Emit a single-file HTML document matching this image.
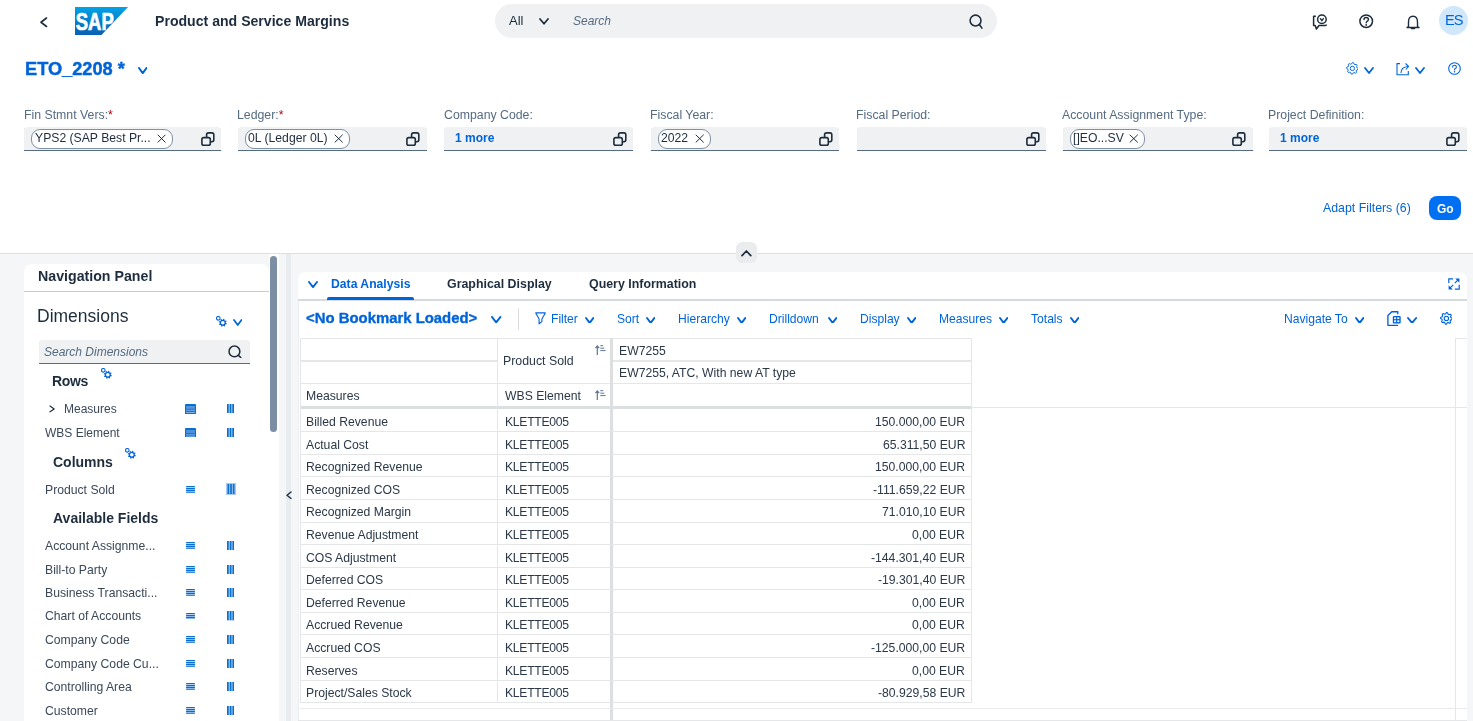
<!DOCTYPE html><html><head><meta charset="utf-8"><style>
html,body{margin:0;padding:0;}
body{width:1473px;height:721px;overflow:hidden;position:relative;background:#fff;font-family:"Liberation Sans",sans-serif;}
.t{position:absolute;white-space:pre;line-height:1;will-change:transform;}
.r{position:absolute;}
</style></head><body>
<svg class="r" style="left:40.00px;top:17.00px;" width="7.5" height="10.5" viewBox="0 0 7.5 10.5" fill="none"><polyline points="6.50,1 1,5.25 6.50,9.50" stroke="#1d2d3e" stroke-width="1.6" stroke-linecap="round" stroke-linejoin="round"/></svg>
<svg class="r" style="left:75.00px;top:6.50px;" width="53" height="28" viewBox="0 0 53 28" fill="none"><defs><linearGradient id="sapg" x1="0" y1="0" x2="0" y2="1"><stop offset="0" stop-color="#00a2e6"/><stop offset="1" stop-color="#0a5fb4"/></linearGradient></defs><polygon points="0,0 53,0 26.5,28 0,28" fill="url(#sapg)"/><text x="0.8" y="22.6" font-family="Liberation Sans" font-weight="bold" font-size="23.5" fill="#fff" stroke="#fff" stroke-width="0.7" textLength="38" lengthAdjust="spacingAndGlyphs">SAP</text></svg>
<div class="t" style="left:154.50px;top:14.36px;font-size:14.1px;font-weight:bold;color:#1d2d3e;font-style:normal;">Product and Service Margins</div>
<div class="r" style="left:495.00px;top:4.00px;width:502.00px;height:34.40px;background:#eff1f2;border-radius:17px;"></div>
<div class="t" style="left:509.30px;top:14.00px;font-size:13px;font-weight:normal;color:#1d2d3e;font-style:normal;">All</div>
<svg class="r" style="left:538.50px;top:18.00px;" width="10.0" height="6.8" viewBox="0 0 10.0 6.8" fill="none"><polyline points="1,1 5.00,5.80 9.00,1" stroke="#1d2d3e" stroke-width="1.7" stroke-linecap="round" stroke-linejoin="round"/></svg>
<div class="t" style="left:573.10px;top:14.84px;font-size:12px;font-weight:normal;color:#556b82;font-style:italic;">Search</div>
<svg class="r" style="left:969.00px;top:14.00px;" width="13.6" height="14.8" viewBox="0 0 13.6 14.8" fill="none"><circle cx="6.54" cy="6.54" r="5.44" stroke="#1d2d3e" stroke-width="1.6"/><line x1="10.46" y1="10.46" x2="12.90" y2="14.10" stroke="#1d2d3e" stroke-width="1.6" stroke-linecap="round"/></svg>
<svg class="r" style="left:1311.50px;top:14.00px;" width="16" height="16" viewBox="0 0 16 16" fill="none"><path d="M3.9 2.2 H1.6 V11.5 H3.2 L4.4 15 L7 11.5 H13.4 Q14.4 11.5 14.4 10.5" stroke="#1d2d3e" stroke-width="1.5" stroke-linejoin="round"/><circle cx="9.9" cy="5.2" r="4.3" stroke="#1d2d3e" stroke-width="1.5"/><path d="M8.4 4.6 L9.9 6.6 L11.4 4.6" stroke="#1d2d3e" stroke-width="1.3" stroke-linecap="round"/></svg>
<svg class="r" style="left:1359.00px;top:14.20px;" width="14.5" height="14.5" viewBox="0 0 14.5 14.5" fill="none"><circle cx="7.2" cy="7.2" r="6.3" stroke="#1d2d3e" stroke-width="1.5"/><path d="M5 5.6 Q5 3.5 7.2 3.5 Q9.4 3.5 9.4 5.5 Q9.4 6.8 7.9 7.5 Q7.2 7.9 7.2 8.8" stroke="#1d2d3e" stroke-width="1.4" stroke-linecap="round"/><circle cx="7.2" cy="10.9" r="0.9" fill="#1d2d3e"/></svg>
<svg class="r" style="left:1406.00px;top:15.00px;" width="14" height="15" viewBox="0 0 14 15" fill="none"><path d="M2.5 11.5 V7 Q2.5 1.2 7 1.2 Q11.5 1.2 11.5 7 V11.5 L13 12.5 H1 Z" stroke="#1d2d3e" stroke-width="1.4" stroke-linejoin="round"/><path d="M5.5 13.5 H8.5" stroke="#1d2d3e" stroke-width="1.6" stroke-linecap="round"/></svg>
<div class="r" style="left:1439.40px;top:6.30px;width:28.80px;height:29.00px;background:#d1e8fc;border-radius:50%;"></div>
<div class="t" style="left:1444.80px;top:12.54px;font-size:14.6px;font-weight:normal;color:#0064d9;font-style:normal;letter-spacing:-1.1px;">ES</div>
<div class="t" style="left:24.60px;top:59.89px;font-size:18.2px;font-weight:bold;color:#0064d9;font-style:normal;-webkit-text-stroke:0.45px #0064d9;">ETO_2208 *</div>
<svg class="r" style="left:137.50px;top:66.50px;" width="9.5" height="7.1" viewBox="0 0 9.5 7.1" fill="none"><polyline points="1,1 4.75,6.10 8.50,1" stroke="#0064d9" stroke-width="2.0" stroke-linecap="round" stroke-linejoin="round"/></svg>
<svg class="r" style="left:1345.50px;top:62.20px;" width="12.8" height="12.8" viewBox="0 0 12.8 12.8" fill="none"><polygon points="12.20,6.40 12.09,7.53 10.58,8.13 10.16,8.91 10.50,10.50 9.62,11.22 8.13,10.58 7.28,10.84 6.40,12.20 5.27,12.09 4.67,10.58 3.89,10.16 2.30,10.50 1.58,9.62 2.22,8.13 1.96,7.28 0.60,6.40 0.71,5.27 2.22,4.67 2.64,3.89 2.30,2.30 3.18,1.58 4.67,2.22 5.52,1.96 6.40,0.60 7.53,0.71 8.13,2.22 8.91,2.64 10.50,2.30 11.22,3.18 10.58,4.67 10.84,5.52" stroke="#0064d9" stroke-width="0.95" stroke-linejoin="round"/><circle cx="6.4" cy="6.4" r="2.18" stroke="#0064d9" stroke-width="0.95"/></svg>
<svg class="r" style="left:1364.00px;top:66.50px;" width="10" height="7.0" viewBox="0 0 10 7.0" fill="none"><polyline points="1,1 5.00,6.00 9.00,1" stroke="#0064d9" stroke-width="1.8" stroke-linecap="round" stroke-linejoin="round"/></svg>
<svg class="r" style="left:1396.00px;top:62.00px;" width="14" height="13.5" viewBox="0 0 14 13.5" fill="none"><path d="M4 1.6 H1 V12.8 H12.3 V9" stroke="#0064d9" stroke-width="1.1"/><path d="M5 11 Q5 5 12 4.5" stroke="#0064d9" stroke-width="1.05"/><path d="M9.5 1.5 L12.6 4.5 L9.8 7.5" stroke="#0064d9" stroke-width="1.05" stroke-linejoin="round"/></svg>
<svg class="r" style="left:1415.00px;top:66.50px;" width="10" height="7.0" viewBox="0 0 10 7.0" fill="none"><polyline points="1,1 5.00,6.00 9.00,1" stroke="#0064d9" stroke-width="1.8" stroke-linecap="round" stroke-linejoin="round"/></svg>
<svg class="r" style="left:1447.80px;top:62.00px;" width="13" height="13" viewBox="0 0 13 13" fill="none"><circle cx="6.5" cy="6.5" r="5.8" stroke="#0064d9" stroke-width="1.1"/><path d="M4.6 5.1 Q4.6 3.2 6.5 3.2 Q8.4 3.2 8.4 5 Q8.4 6.1 7.1 6.8 Q6.5 7.2 6.5 8" stroke="#0064d9" stroke-width="1.1" stroke-linecap="round"/><circle cx="6.5" cy="9.8" r="0.75" fill="#0064d9"/></svg>
<div class="t" style="left:23.60px;top:108.69px;font-size:12.3px;font-weight:normal;color:#556b82;font-style:normal;">Fin Stmnt Vers:<span style="color:#aa0808">*</span></div>
<div class="r" style="left:24.30px;top:127.00px;width:196.80px;height:24.00px;background:#eff1f2;border-radius:4px 4px 0 0;box-shadow:inset 0 -1px 0 #556b81;"></div>
<svg class="r" style="left:200.80px;top:131.60px;" width="14" height="14" viewBox="0 0 14 14" fill="none"><rect x="0.9" y="5.6" width="8.4" height="7.6" rx="1.8" stroke="#1d2d3e" stroke-width="1.6"/><path d="M5.6 5.2 V2.8 Q5.6 0.9 7.5 0.9 H11 Q12.8 0.9 12.8 2.8 V7.8 Q12.8 9.7 11 9.7 H9.6" stroke="#1d2d3e" stroke-width="1.6" fill="none"/></svg>
<div class="t" style="left:237.40px;top:108.69px;font-size:12.3px;font-weight:normal;color:#556b82;font-style:normal;">Ledger:<span style="color:#aa0808">*</span></div>
<div class="r" style="left:238.10px;top:127.00px;width:188.50px;height:24.00px;background:#eff1f2;border-radius:4px 4px 0 0;box-shadow:inset 0 -1px 0 #556b81;"></div>
<svg class="r" style="left:406.30px;top:131.60px;" width="14" height="14" viewBox="0 0 14 14" fill="none"><rect x="0.9" y="5.6" width="8.4" height="7.6" rx="1.8" stroke="#1d2d3e" stroke-width="1.6"/><path d="M5.6 5.2 V2.8 Q5.6 0.9 7.5 0.9 H11 Q12.8 0.9 12.8 2.8 V7.8 Q12.8 9.7 11 9.7 H9.6" stroke="#1d2d3e" stroke-width="1.6" fill="none"/></svg>
<div class="t" style="left:443.70px;top:108.69px;font-size:12.3px;font-weight:normal;color:#556b82;font-style:normal;">Company Code:</div>
<div class="r" style="left:444.40px;top:127.00px;width:188.80px;height:24.00px;background:#eff1f2;border-radius:4px 4px 0 0;box-shadow:inset 0 -1px 0 #556b81;"></div>
<svg class="r" style="left:612.90px;top:131.60px;" width="14" height="14" viewBox="0 0 14 14" fill="none"><rect x="0.9" y="5.6" width="8.4" height="7.6" rx="1.8" stroke="#1d2d3e" stroke-width="1.6"/><path d="M5.6 5.2 V2.8 Q5.6 0.9 7.5 0.9 H11 Q12.8 0.9 12.8 2.8 V7.8 Q12.8 9.7 11 9.7 H9.6" stroke="#1d2d3e" stroke-width="1.6" fill="none"/></svg>
<div class="t" style="left:650.00px;top:108.69px;font-size:12.3px;font-weight:normal;color:#556b82;font-style:normal;">Fiscal Year:</div>
<div class="r" style="left:650.70px;top:127.00px;width:188.80px;height:24.00px;background:#eff1f2;border-radius:4px 4px 0 0;box-shadow:inset 0 -1px 0 #556b81;"></div>
<svg class="r" style="left:819.20px;top:131.60px;" width="14" height="14" viewBox="0 0 14 14" fill="none"><rect x="0.9" y="5.6" width="8.4" height="7.6" rx="1.8" stroke="#1d2d3e" stroke-width="1.6"/><path d="M5.6 5.2 V2.8 Q5.6 0.9 7.5 0.9 H11 Q12.8 0.9 12.8 2.8 V7.8 Q12.8 9.7 11 9.7 H9.6" stroke="#1d2d3e" stroke-width="1.6" fill="none"/></svg>
<div class="t" style="left:856.30px;top:108.69px;font-size:12.3px;font-weight:normal;color:#556b82;font-style:normal;">Fiscal Period:</div>
<div class="r" style="left:857.00px;top:127.00px;width:188.80px;height:24.00px;background:#eff1f2;border-radius:4px 4px 0 0;box-shadow:inset 0 -1px 0 #556b81;"></div>
<svg class="r" style="left:1025.50px;top:131.60px;" width="14" height="14" viewBox="0 0 14 14" fill="none"><rect x="0.9" y="5.6" width="8.4" height="7.6" rx="1.8" stroke="#1d2d3e" stroke-width="1.6"/><path d="M5.6 5.2 V2.8 Q5.6 0.9 7.5 0.9 H11 Q12.8 0.9 12.8 2.8 V7.8 Q12.8 9.7 11 9.7 H9.6" stroke="#1d2d3e" stroke-width="1.6" fill="none"/></svg>
<div class="t" style="left:1062.10px;top:108.69px;font-size:12.3px;font-weight:normal;color:#556b82;font-style:normal;">Account Assignment Type:</div>
<div class="r" style="left:1062.80px;top:127.00px;width:189.80px;height:24.00px;background:#eff1f2;border-radius:4px 4px 0 0;box-shadow:inset 0 -1px 0 #556b81;"></div>
<svg class="r" style="left:1232.30px;top:131.60px;" width="14" height="14" viewBox="0 0 14 14" fill="none"><rect x="0.9" y="5.6" width="8.4" height="7.6" rx="1.8" stroke="#1d2d3e" stroke-width="1.6"/><path d="M5.6 5.2 V2.8 Q5.6 0.9 7.5 0.9 H11 Q12.8 0.9 12.8 2.8 V7.8 Q12.8 9.7 11 9.7 H9.6" stroke="#1d2d3e" stroke-width="1.6" fill="none"/></svg>
<div class="t" style="left:1268.40px;top:108.69px;font-size:12.3px;font-weight:normal;color:#556b82;font-style:normal;">Project Definition:</div>
<div class="r" style="left:1269.10px;top:127.00px;width:197.60px;height:24.00px;background:#eff1f2;border-radius:4px 4px 0 0;box-shadow:inset 0 -1px 0 #556b81;"></div>
<svg class="r" style="left:1446.40px;top:131.60px;" width="14" height="14" viewBox="0 0 14 14" fill="none"><rect x="0.9" y="5.6" width="8.4" height="7.6" rx="1.8" stroke="#1d2d3e" stroke-width="1.6"/><path d="M5.6 5.2 V2.8 Q5.6 0.9 7.5 0.9 H11 Q12.8 0.9 12.8 2.8 V7.8 Q12.8 9.7 11 9.7 H9.6" stroke="#1d2d3e" stroke-width="1.6" fill="none"/></svg>
<div class="r" style="left:31.10px;top:129.10px;width:141.50px;height:19.50px;background:#fff;border:1px solid #7e90a3;border-radius:9px;box-sizing:border-box;"></div>
<div class="t" style="left:34.60px;top:132.27px;font-size:12.2px;font-weight:normal;color:#1d2d3e;font-style:normal;">YPS2 (SAP Best Pr...</div>
<svg class="r" style="left:156.80px;top:133.60px;" width="9.2" height="9.2" viewBox="0 0 9.2 9.2" fill="none"><path d="M1 1 L8.20 8.20 M8.20 1 L1 8.20" stroke="#1d2d3e" stroke-width="1.0" stroke-linecap="round"/></svg>
<div class="r" style="left:244.70px;top:129.10px;width:105.80px;height:19.50px;background:#fff;border:1px solid #7e90a3;border-radius:9px;box-sizing:border-box;"></div>
<div class="t" style="left:247.60px;top:132.27px;font-size:12.2px;font-weight:normal;color:#1d2d3e;font-style:normal;">0L (Ledger 0L)</div>
<svg class="r" style="left:334.40px;top:133.60px;" width="9.4" height="9.2" viewBox="0 0 9.4 9.2" fill="none"><path d="M1 1 L8.40 8.20 M8.40 1 L1 8.20" stroke="#1d2d3e" stroke-width="1.0" stroke-linecap="round"/></svg>
<div class="r" style="left:657.70px;top:129.10px;width:53.00px;height:19.50px;background:#fff;border:1px solid #7e90a3;border-radius:9px;box-sizing:border-box;"></div>
<div class="t" style="left:660.50px;top:132.27px;font-size:12.2px;font-weight:normal;color:#1d2d3e;font-style:normal;">2022</div>
<svg class="r" style="left:694.60px;top:133.60px;" width="9.4" height="9.2" viewBox="0 0 9.4 9.2" fill="none"><path d="M1 1 L8.40 8.20 M8.40 1 L1 8.20" stroke="#1d2d3e" stroke-width="1.0" stroke-linecap="round"/></svg>
<div class="r" style="left:1069.70px;top:129.10px;width:75.50px;height:19.50px;background:#fff;border:1px solid #7e90a3;border-radius:9px;box-sizing:border-box;"></div>
<div class="t" style="left:1073.00px;top:132.27px;font-size:12.2px;font-weight:normal;color:#1d2d3e;font-style:normal;">[]EO...SV</div>
<svg class="r" style="left:1129.00px;top:133.60px;" width="9.5" height="9.2" viewBox="0 0 9.5 9.2" fill="none"><path d="M1 1 L8.50 8.20 M8.50 1 L1 8.20" stroke="#1d2d3e" stroke-width="1.0" stroke-linecap="round"/></svg>
<div class="t" style="left:455.40px;top:132.24px;font-size:12px;font-weight:bold;color:#0064d9;font-style:normal;">1 more</div>
<div class="t" style="left:1280.20px;top:132.24px;font-size:12px;font-weight:bold;color:#0064d9;font-style:normal;">1 more</div>
<div class="t" style="left:1323.40px;top:202.35px;font-size:12.35px;font-weight:normal;color:#0064d9;font-style:normal;">Adapt Filters (6)</div>
<div class="r" style="left:1429.20px;top:196.00px;width:31.80px;height:24.40px;background:#0070f2;border-radius:8px;"></div>
<div class="t" style="left:1436.60px;top:202.74px;font-size:12px;font-weight:bold;color:#fff;font-style:normal;">Go</div>
<div class="r" style="left:0.00px;top:253.00px;width:1473.00px;height:1.00px;background:#dcdfe3;"></div>
<div class="r" style="left:0.00px;top:254.00px;width:1473.00px;height:467.00px;background:#f5f6f7;"></div>
<div class="r" style="left:736.30px;top:241.60px;width:20.50px;height:21.60px;background:#eaecee;border-radius:6px;"></div>
<svg class="r" style="left:741.20px;top:250.30px;" width="10.8" height="6.7" viewBox="0 0 10.8 6.7" fill="none"><polyline points="1,5.70 5.40,1 9.80,5.70" stroke="#1d2d3e" stroke-width="1.7" stroke-linecap="round" stroke-linejoin="round"/></svg>
<div class="r" style="left:24.00px;top:264.20px;width:244.60px;height:460.80px;background:#fff;border-radius:8px 8px 0 0;"></div>
<div class="r" style="left:268.60px;top:254.00px;width:10.60px;height:467.00px;background:#fff;"></div>
<div class="r" style="left:270.00px;top:255.90px;width:7.20px;height:175.90px;background:#7b8ea4;border-radius:3.6px;"></div>
<div class="t" style="left:37.80px;top:268.58px;font-size:14.2px;font-weight:bold;color:#1d2d3e;font-style:normal;">Navigation Panel</div>
<div class="r" style="left:24.00px;top:290.70px;width:244.60px;height:1.20px;background:#c5ccd3;"></div>
<div class="t" style="left:37.40px;top:308.39px;font-size:17.5px;font-weight:normal;color:#1d2d3e;font-style:normal;">Dimensions</div>
<svg class="r" style="left:215.90px;top:316.00px;" width="11.5" height="11.5" viewBox="0 0 11.5 11.5" fill="none"><circle cx="2.3" cy="2.3" r="1.8" stroke="#0064d9" stroke-width="1.1"/><polygon points="10.82,7.60 10.59,8.37 9.29,8.47 8.92,8.92 9.08,10.21 8.37,10.59 7.39,9.74 6.80,9.80 6.00,10.82 5.23,10.59 5.13,9.29 4.68,8.92 3.39,9.08 3.01,8.37 3.86,7.39 3.80,6.80 2.78,6.00 3.01,5.23 4.31,5.13 4.68,4.68 4.52,3.39 5.23,3.01 6.21,3.86 6.80,3.80 7.60,2.78 8.37,3.01 8.47,4.31 8.92,4.68 10.21,4.52 10.59,5.23 9.74,6.21 9.80,6.80" fill="#0064d9"/><circle cx="6.80" cy="6.80" r="1.8" fill="#fff"/></svg>
<svg class="r" style="left:232.50px;top:318.80px;" width="9.5" height="7.0" viewBox="0 0 9.5 7.0" fill="none"><polyline points="1,1 4.75,6.00 8.50,1" stroke="#0064d9" stroke-width="1.7" stroke-linecap="round" stroke-linejoin="round"/></svg>
<div class="r" style="left:38.60px;top:340.00px;width:211.10px;height:24.00px;background:#eff1f2;border-radius:4px 4px 0 0;box-shadow:inset 0 -1px 0 #556b81;"></div>
<div class="t" style="left:43.90px;top:345.94px;font-size:12px;font-weight:normal;color:#556b82;font-style:italic;">Search Dimensions</div>
<svg class="r" style="left:228.00px;top:344.60px;" width="13.5" height="13.2" viewBox="0 0 13.5 13.2" fill="none"><circle cx="6.45" cy="6.45" r="5.40" stroke="#1d2d3e" stroke-width="1.5"/><line x1="10.34" y1="10.34" x2="12.80" y2="12.50" stroke="#1d2d3e" stroke-width="1.5" stroke-linecap="round"/></svg>
<div class="t" style="left:52.30px;top:374.45px;font-size:14px;font-weight:bold;color:#1d2d3e;font-style:normal;letter-spacing:-0.35px;">Rows</div>
<svg class="r" style="left:101.20px;top:368.20px;" width="11.5" height="11.5" viewBox="0 0 11.5 11.5" fill="none"><circle cx="2.3" cy="2.3" r="1.8" stroke="#0064d9" stroke-width="1.1"/><polygon points="10.82,7.60 10.59,8.37 9.29,8.47 8.92,8.92 9.08,10.21 8.37,10.59 7.39,9.74 6.80,9.80 6.00,10.82 5.23,10.59 5.13,9.29 4.68,8.92 3.39,9.08 3.01,8.37 3.86,7.39 3.80,6.80 2.78,6.00 3.01,5.23 4.31,5.13 4.68,4.68 4.52,3.39 5.23,3.01 6.21,3.86 6.80,3.80 7.60,2.78 8.37,3.01 8.47,4.31 8.92,4.68 10.21,4.52 10.59,5.23 9.74,6.21 9.80,6.80" fill="#0064d9"/><circle cx="6.80" cy="6.80" r="1.8" fill="#fff"/></svg>
<svg class="r" style="left:48.60px;top:404.80px;" width="6.2" height="7.8" viewBox="0 0 6.2 7.8" fill="none"><polyline points="1,1 5.20,3.90 1,6.80" stroke="#1d2d3e" stroke-width="1.2" stroke-linecap="round" stroke-linejoin="round"/></svg>
<div class="t" style="left:63.70px;top:402.94px;font-size:12px;font-weight:normal;color:#3a4858;font-style:normal;">Measures</div>
<svg class="r" style="left:185.00px;top:403.80px;" width="11" height="10.2" viewBox="0 0 11 10.2" fill="none"><rect x="0" y="0" width="11" height="10.2" rx="1" fill="#0a6ed1"/><rect x="1.1" y="2.4" width="8.80" height="6.70" fill="#7fb0ea"/><rect x="1.1" y="3.62" width="8.80" height="0.9" fill="#0a6ed1"/><rect x="1.1" y="5.30" width="8.80" height="0.9" fill="#0a6ed1"/><rect x="1.1" y="6.97" width="8.80" height="0.9" fill="#0a6ed1"/></svg>
<svg class="r" style="left:227.30px;top:404.00px;" width="7" height="9.2" viewBox="0 0 7 9.2" fill="none"><rect x="0" y="0" width="7" height="9.2" fill="#bcd6f5"/><rect x="0.00" y="0" width="1.68" height="9.2" fill="#0a6ed1"/><rect x="2.66" y="0" width="1.68" height="9.2" fill="#0a6ed1"/><rect x="5.32" y="0" width="1.68" height="9.2" fill="#0a6ed1"/></svg>
<div class="t" style="left:44.90px;top:426.74px;font-size:12px;font-weight:normal;color:#3a4858;font-style:normal;">WBS Element</div>
<svg class="r" style="left:185.00px;top:427.60px;" width="11" height="9.8" viewBox="0 0 11 9.8" fill="none"><rect x="0" y="0" width="11" height="9.8" rx="1" fill="#0a6ed1"/><rect x="1.1" y="2.4" width="8.80" height="6.30" fill="#7fb0ea"/><rect x="1.1" y="3.52" width="8.80" height="0.9" fill="#0a6ed1"/><rect x="1.1" y="5.10" width="8.80" height="0.9" fill="#0a6ed1"/><rect x="1.1" y="6.67" width="8.80" height="0.9" fill="#0a6ed1"/></svg>
<svg class="r" style="left:227.30px;top:428.00px;" width="7" height="9.2" viewBox="0 0 7 9.2" fill="none"><rect x="0" y="0" width="7" height="9.2" fill="#bcd6f5"/><rect x="0.00" y="0" width="1.68" height="9.2" fill="#0a6ed1"/><rect x="2.66" y="0" width="1.68" height="9.2" fill="#0a6ed1"/><rect x="5.32" y="0" width="1.68" height="9.2" fill="#0a6ed1"/></svg>
<div class="t" style="left:53.30px;top:454.95px;font-size:14px;font-weight:bold;color:#1d2d3e;font-style:normal;">Columns</div>
<svg class="r" style="left:124.90px;top:448.20px;" width="11.5" height="11.5" viewBox="0 0 11.5 11.5" fill="none"><circle cx="2.3" cy="2.3" r="1.8" stroke="#0064d9" stroke-width="1.1"/><polygon points="10.82,7.60 10.59,8.37 9.29,8.47 8.92,8.92 9.08,10.21 8.37,10.59 7.39,9.74 6.80,9.80 6.00,10.82 5.23,10.59 5.13,9.29 4.68,8.92 3.39,9.08 3.01,8.37 3.86,7.39 3.80,6.80 2.78,6.00 3.01,5.23 4.31,5.13 4.68,4.68 4.52,3.39 5.23,3.01 6.21,3.86 6.80,3.80 7.60,2.78 8.37,3.01 8.47,4.31 8.92,4.68 10.21,4.52 10.59,5.23 9.74,6.21 9.80,6.80" fill="#0064d9"/><circle cx="6.80" cy="6.80" r="1.8" fill="#fff"/></svg>
<div class="t" style="left:45.10px;top:483.67px;font-size:12.2px;font-weight:normal;color:#3a4858;font-style:normal;">Product Sold</div>
<svg class="r" style="left:186.00px;top:486.20px;" width="9" height="6.8" viewBox="0 0 9 6.8" fill="none"><rect x="0" y="0.3" width="9" height="6.20" fill="#b5d2f4"/><rect x="0" y="0.00" width="9" height="1.1" rx="0.5" fill="#0a6ed1"/><rect x="0" y="1.90" width="9" height="1.1" rx="0.5" fill="#0a6ed1"/><rect x="0" y="3.80" width="9" height="1.1" rx="0.5" fill="#0a6ed1"/><rect x="0" y="5.70" width="9" height="1.1" rx="0.5" fill="#0a6ed1"/></svg>
<svg class="r" style="left:225.80px;top:483.10px;" width="10" height="12" viewBox="0 0 10 12" fill="none"><rect x="0" y="0" width="10" height="12" fill="#a9c9f2"/><rect x="1.50" y="1" width="1.68" height="10" fill="#0a6ed1"/><rect x="4.16" y="1" width="1.68" height="10" fill="#0a6ed1"/><rect x="6.82" y="1" width="1.68" height="10" fill="#0a6ed1"/></svg>
<div class="t" style="left:53.30px;top:511.25px;font-size:14px;font-weight:bold;color:#1d2d3e;font-style:normal;">Available Fields</div>
<div class="t" style="left:45.10px;top:539.97px;font-size:12.2px;font-weight:normal;color:#3a4858;font-style:normal;">Account Assignme...</div>
<svg class="r" style="left:186.00px;top:542.20px;" width="9" height="6.8" viewBox="0 0 9 6.8" fill="none"><rect x="0" y="0.3" width="9" height="6.20" fill="#b5d2f4"/><rect x="0" y="0.00" width="9" height="1.1" rx="0.5" fill="#0a6ed1"/><rect x="0" y="1.90" width="9" height="1.1" rx="0.5" fill="#0a6ed1"/><rect x="0" y="3.80" width="9" height="1.1" rx="0.5" fill="#0a6ed1"/><rect x="0" y="5.70" width="9" height="1.1" rx="0.5" fill="#0a6ed1"/></svg>
<svg class="r" style="left:227.10px;top:541.00px;" width="7.2" height="9.3" viewBox="0 0 7.2 9.3" fill="none"><rect x="0" y="0" width="7.2" height="9.3" fill="#bcd6f5"/><rect x="0.00" y="0" width="1.73" height="9.3" fill="#0a6ed1"/><rect x="2.74" y="0" width="1.73" height="9.3" fill="#0a6ed1"/><rect x="5.47" y="0" width="1.73" height="9.3" fill="#0a6ed1"/></svg>
<div class="t" style="left:45.10px;top:563.67px;font-size:12.2px;font-weight:normal;color:#3a4858;font-style:normal;">Bill-to Party</div>
<svg class="r" style="left:186.00px;top:565.90px;" width="9" height="6.8" viewBox="0 0 9 6.8" fill="none"><rect x="0" y="0.3" width="9" height="6.20" fill="#b5d2f4"/><rect x="0" y="0.00" width="9" height="1.1" rx="0.5" fill="#0a6ed1"/><rect x="0" y="1.90" width="9" height="1.1" rx="0.5" fill="#0a6ed1"/><rect x="0" y="3.80" width="9" height="1.1" rx="0.5" fill="#0a6ed1"/><rect x="0" y="5.70" width="9" height="1.1" rx="0.5" fill="#0a6ed1"/></svg>
<svg class="r" style="left:227.10px;top:564.70px;" width="7.2" height="9.3" viewBox="0 0 7.2 9.3" fill="none"><rect x="0" y="0" width="7.2" height="9.3" fill="#bcd6f5"/><rect x="0.00" y="0" width="1.73" height="9.3" fill="#0a6ed1"/><rect x="2.74" y="0" width="1.73" height="9.3" fill="#0a6ed1"/><rect x="5.47" y="0" width="1.73" height="9.3" fill="#0a6ed1"/></svg>
<div class="t" style="left:45.10px;top:586.87px;font-size:12.2px;font-weight:normal;color:#3a4858;font-style:normal;">Business Transacti...</div>
<svg class="r" style="left:186.00px;top:589.10px;" width="9" height="6.8" viewBox="0 0 9 6.8" fill="none"><rect x="0" y="0.3" width="9" height="6.20" fill="#b5d2f4"/><rect x="0" y="0.00" width="9" height="1.1" rx="0.5" fill="#0a6ed1"/><rect x="0" y="1.90" width="9" height="1.1" rx="0.5" fill="#0a6ed1"/><rect x="0" y="3.80" width="9" height="1.1" rx="0.5" fill="#0a6ed1"/><rect x="0" y="5.70" width="9" height="1.1" rx="0.5" fill="#0a6ed1"/></svg>
<svg class="r" style="left:227.10px;top:587.90px;" width="7.2" height="9.3" viewBox="0 0 7.2 9.3" fill="none"><rect x="0" y="0" width="7.2" height="9.3" fill="#bcd6f5"/><rect x="0.00" y="0" width="1.73" height="9.3" fill="#0a6ed1"/><rect x="2.74" y="0" width="1.73" height="9.3" fill="#0a6ed1"/><rect x="5.47" y="0" width="1.73" height="9.3" fill="#0a6ed1"/></svg>
<div class="t" style="left:45.10px;top:610.37px;font-size:12.2px;font-weight:normal;color:#3a4858;font-style:normal;">Chart of Accounts</div>
<svg class="r" style="left:186.00px;top:612.60px;" width="9" height="6.8" viewBox="0 0 9 6.8" fill="none"><rect x="0" y="0.3" width="9" height="6.20" fill="#b5d2f4"/><rect x="0" y="0.00" width="9" height="1.1" rx="0.5" fill="#0a6ed1"/><rect x="0" y="1.90" width="9" height="1.1" rx="0.5" fill="#0a6ed1"/><rect x="0" y="3.80" width="9" height="1.1" rx="0.5" fill="#0a6ed1"/><rect x="0" y="5.70" width="9" height="1.1" rx="0.5" fill="#0a6ed1"/></svg>
<svg class="r" style="left:227.10px;top:611.40px;" width="7.2" height="9.3" viewBox="0 0 7.2 9.3" fill="none"><rect x="0" y="0" width="7.2" height="9.3" fill="#bcd6f5"/><rect x="0.00" y="0" width="1.73" height="9.3" fill="#0a6ed1"/><rect x="2.74" y="0" width="1.73" height="9.3" fill="#0a6ed1"/><rect x="5.47" y="0" width="1.73" height="9.3" fill="#0a6ed1"/></svg>
<div class="t" style="left:45.10px;top:634.17px;font-size:12.2px;font-weight:normal;color:#3a4858;font-style:normal;">Company Code</div>
<svg class="r" style="left:186.00px;top:636.40px;" width="9" height="6.8" viewBox="0 0 9 6.8" fill="none"><rect x="0" y="0.3" width="9" height="6.20" fill="#b5d2f4"/><rect x="0" y="0.00" width="9" height="1.1" rx="0.5" fill="#0a6ed1"/><rect x="0" y="1.90" width="9" height="1.1" rx="0.5" fill="#0a6ed1"/><rect x="0" y="3.80" width="9" height="1.1" rx="0.5" fill="#0a6ed1"/><rect x="0" y="5.70" width="9" height="1.1" rx="0.5" fill="#0a6ed1"/></svg>
<svg class="r" style="left:227.10px;top:635.20px;" width="7.2" height="9.3" viewBox="0 0 7.2 9.3" fill="none"><rect x="0" y="0" width="7.2" height="9.3" fill="#bcd6f5"/><rect x="0.00" y="0" width="1.73" height="9.3" fill="#0a6ed1"/><rect x="2.74" y="0" width="1.73" height="9.3" fill="#0a6ed1"/><rect x="5.47" y="0" width="1.73" height="9.3" fill="#0a6ed1"/></svg>
<div class="t" style="left:45.10px;top:657.67px;font-size:12.2px;font-weight:normal;color:#3a4858;font-style:normal;">Company Code Cu...</div>
<svg class="r" style="left:186.00px;top:659.90px;" width="9" height="6.8" viewBox="0 0 9 6.8" fill="none"><rect x="0" y="0.3" width="9" height="6.20" fill="#b5d2f4"/><rect x="0" y="0.00" width="9" height="1.1" rx="0.5" fill="#0a6ed1"/><rect x="0" y="1.90" width="9" height="1.1" rx="0.5" fill="#0a6ed1"/><rect x="0" y="3.80" width="9" height="1.1" rx="0.5" fill="#0a6ed1"/><rect x="0" y="5.70" width="9" height="1.1" rx="0.5" fill="#0a6ed1"/></svg>
<svg class="r" style="left:227.10px;top:658.70px;" width="7.2" height="9.3" viewBox="0 0 7.2 9.3" fill="none"><rect x="0" y="0" width="7.2" height="9.3" fill="#bcd6f5"/><rect x="0.00" y="0" width="1.73" height="9.3" fill="#0a6ed1"/><rect x="2.74" y="0" width="1.73" height="9.3" fill="#0a6ed1"/><rect x="5.47" y="0" width="1.73" height="9.3" fill="#0a6ed1"/></svg>
<div class="t" style="left:45.10px;top:681.17px;font-size:12.2px;font-weight:normal;color:#3a4858;font-style:normal;">Controlling Area</div>
<svg class="r" style="left:186.00px;top:683.40px;" width="9" height="6.8" viewBox="0 0 9 6.8" fill="none"><rect x="0" y="0.3" width="9" height="6.20" fill="#b5d2f4"/><rect x="0" y="0.00" width="9" height="1.1" rx="0.5" fill="#0a6ed1"/><rect x="0" y="1.90" width="9" height="1.1" rx="0.5" fill="#0a6ed1"/><rect x="0" y="3.80" width="9" height="1.1" rx="0.5" fill="#0a6ed1"/><rect x="0" y="5.70" width="9" height="1.1" rx="0.5" fill="#0a6ed1"/></svg>
<svg class="r" style="left:227.10px;top:682.20px;" width="7.2" height="9.3" viewBox="0 0 7.2 9.3" fill="none"><rect x="0" y="0" width="7.2" height="9.3" fill="#bcd6f5"/><rect x="0.00" y="0" width="1.73" height="9.3" fill="#0a6ed1"/><rect x="2.74" y="0" width="1.73" height="9.3" fill="#0a6ed1"/><rect x="5.47" y="0" width="1.73" height="9.3" fill="#0a6ed1"/></svg>
<div class="t" style="left:45.10px;top:704.67px;font-size:12.2px;font-weight:normal;color:#3a4858;font-style:normal;">Customer</div>
<svg class="r" style="left:186.00px;top:706.90px;" width="9" height="6.8" viewBox="0 0 9 6.8" fill="none"><rect x="0" y="0.3" width="9" height="6.20" fill="#b5d2f4"/><rect x="0" y="0.00" width="9" height="1.1" rx="0.5" fill="#0a6ed1"/><rect x="0" y="1.90" width="9" height="1.1" rx="0.5" fill="#0a6ed1"/><rect x="0" y="3.80" width="9" height="1.1" rx="0.5" fill="#0a6ed1"/><rect x="0" y="5.70" width="9" height="1.1" rx="0.5" fill="#0a6ed1"/></svg>
<svg class="r" style="left:227.10px;top:705.70px;" width="7.2" height="9.3" viewBox="0 0 7.2 9.3" fill="none"><rect x="0" y="0" width="7.2" height="9.3" fill="#bcd6f5"/><rect x="0.00" y="0" width="1.73" height="9.3" fill="#0a6ed1"/><rect x="2.74" y="0" width="1.73" height="9.3" fill="#0a6ed1"/><rect x="5.47" y="0" width="1.73" height="9.3" fill="#0a6ed1"/></svg>
<div class="r" style="left:286.40px;top:254.00px;width:4.40px;height:467.00px;background:#e9ecee;"></div>
<svg class="r" style="left:285.60px;top:490.80px;" width="6.0" height="8.5" viewBox="0 0 6.0 8.5" fill="none"><polyline points="5.00,1 1,4.25 5.00,7.50" stroke="#1d2d3e" stroke-width="1.4" stroke-linecap="round" stroke-linejoin="round"/></svg>
<div class="r" style="left:298.00px;top:272.00px;width:1169.30px;height:449.00px;background:#fff;border-radius:8px 8px 0 0;"></div>
<svg class="r" style="left:308.00px;top:281.20px;" width="10" height="7.1" viewBox="0 0 10 7.1" fill="none"><polyline points="1,1 5.00,6.10 9.00,1" stroke="#0064d9" stroke-width="1.9" stroke-linecap="round" stroke-linejoin="round"/></svg>
<div class="t" style="left:331.10px;top:277.87px;font-size:12.2px;font-weight:bold;color:#0064d9;font-style:normal;">Data Analysis</div>
<div class="t" style="left:447.20px;top:277.70px;font-size:12.4px;font-weight:bold;color:#1d2d3e;font-style:normal;">Graphical Display</div>
<div class="t" style="left:588.70px;top:277.70px;font-size:12.4px;font-weight:bold;color:#1d2d3e;font-style:normal;">Query Information</div>
<div class="r" style="left:298.00px;top:298.60px;width:1169.30px;height:2.00px;background:#d5dadd;"></div>
<div class="r" style="left:327.10px;top:296.70px;width:87.40px;height:2.90px;background:#0064d9;border-radius:2px 2px 0 0;"></div>
<svg class="r" style="left:1448.00px;top:278.00px;" width="12" height="12" viewBox="0 0 12 12" fill="none"><path d="M0.8 5 V0.8 H5 M11.2 6.8 V11.2 H6.8 M6.8 5.2 L10.6 1.4 M5.2 6.8 L1.4 10.6" stroke="#0064d9" stroke-width="1.2"/><path d="M7.2 0.6 H11.4 V4.8 Z M0.6 7.2 V11.4 H4.8 Z" fill="#0064d9"/></svg>
<div class="t" style="left:306.40px;top:310.69px;font-size:14.9px;font-weight:bold;color:#0064d9;font-style:normal;-webkit-text-stroke:0.35px #0064d9;">&lt;No Bookmark Loaded&gt;</div>
<svg class="r" style="left:491.20px;top:316.00px;" width="10.4" height="7.4" viewBox="0 0 10.4 7.4" fill="none"><polyline points="1,1 5.20,6.40 9.40,1" stroke="#0064d9" stroke-width="2.0" stroke-linecap="round" stroke-linejoin="round"/></svg>
<div class="r" style="left:517.70px;top:308.00px;width:1.20px;height:21.50px;background:#d9dde2;"></div>
<svg class="r" style="left:535.30px;top:312.20px;" width="11" height="12.5" viewBox="0 0 11 12.5" fill="none"><path d="M0.7 0.9 H10.3 L6.9 6.9 V9.6 L4.1 11.8 V6.9 Z" stroke="#0064d9" stroke-width="1.1" stroke-linejoin="round"/></svg>
<div class="t" style="left:550.60px;top:313.36px;font-size:12.1px;font-weight:normal;color:#0064d9;font-style:normal;">Filter</div>
<svg class="r" style="left:584.50px;top:316.60px;" width="9.3" height="6.9" viewBox="0 0 9.3 6.9" fill="none"><polyline points="1,1 4.65,5.90 8.30,1" stroke="#0064d9" stroke-width="1.9" stroke-linecap="round" stroke-linejoin="round"/></svg>
<div class="t" style="left:616.60px;top:313.36px;font-size:12.1px;font-weight:normal;color:#0064d9;font-style:normal;">Sort</div>
<svg class="r" style="left:646.20px;top:316.60px;" width="9.3" height="6.9" viewBox="0 0 9.3 6.9" fill="none"><polyline points="1,1 4.65,5.90 8.30,1" stroke="#0064d9" stroke-width="1.9" stroke-linecap="round" stroke-linejoin="round"/></svg>
<div class="t" style="left:677.70px;top:313.36px;font-size:12.1px;font-weight:normal;color:#0064d9;font-style:normal;">Hierarchy</div>
<svg class="r" style="left:736.90px;top:316.60px;" width="9.3" height="6.9" viewBox="0 0 9.3 6.9" fill="none"><polyline points="1,1 4.65,5.90 8.30,1" stroke="#0064d9" stroke-width="1.9" stroke-linecap="round" stroke-linejoin="round"/></svg>
<div class="t" style="left:768.60px;top:313.36px;font-size:12.1px;font-weight:normal;color:#0064d9;font-style:normal;">Drilldown</div>
<svg class="r" style="left:828.00px;top:316.60px;" width="9.3" height="6.9" viewBox="0 0 9.3 6.9" fill="none"><polyline points="1,1 4.65,5.90 8.30,1" stroke="#0064d9" stroke-width="1.9" stroke-linecap="round" stroke-linejoin="round"/></svg>
<div class="t" style="left:859.60px;top:313.36px;font-size:12.1px;font-weight:normal;color:#0064d9;font-style:normal;">Display</div>
<svg class="r" style="left:907.10px;top:316.60px;" width="9.3" height="6.9" viewBox="0 0 9.3 6.9" fill="none"><polyline points="1,1 4.65,5.90 8.30,1" stroke="#0064d9" stroke-width="1.9" stroke-linecap="round" stroke-linejoin="round"/></svg>
<div class="t" style="left:938.90px;top:313.36px;font-size:12.1px;font-weight:normal;color:#0064d9;font-style:normal;">Measures</div>
<svg class="r" style="left:999.00px;top:316.60px;" width="9.3" height="6.9" viewBox="0 0 9.3 6.9" fill="none"><polyline points="1,1 4.65,5.90 8.30,1" stroke="#0064d9" stroke-width="1.9" stroke-linecap="round" stroke-linejoin="round"/></svg>
<div class="t" style="left:1030.70px;top:313.36px;font-size:12.1px;font-weight:normal;color:#0064d9;font-style:normal;">Totals</div>
<svg class="r" style="left:1070.20px;top:316.60px;" width="9.3" height="6.9" viewBox="0 0 9.3 6.9" fill="none"><polyline points="1,1 4.65,5.90 8.30,1" stroke="#0064d9" stroke-width="1.9" stroke-linecap="round" stroke-linejoin="round"/></svg>
<div class="t" style="left:1283.50px;top:313.36px;font-size:12.1px;font-weight:normal;color:#0064d9;font-style:normal;">Navigate To</div>
<svg class="r" style="left:1354.70px;top:316.60px;" width="9.3" height="6.9" viewBox="0 0 9.3 6.9" fill="none"><polyline points="1,1 4.65,5.90 8.30,1" stroke="#0064d9" stroke-width="1.9" stroke-linecap="round" stroke-linejoin="round"/></svg>
<svg class="r" style="left:1387.40px;top:311.00px;" width="14.5" height="15" viewBox="0 0 14.5 15" fill="none"><path d="M4.8 0.7 H10.8 V2.8 M4.8 0.7 L0.9 4.6 V14.3 H10.6" stroke="#0064d9" stroke-width="1.35" stroke-linejoin="round" stroke-linecap="round"/><rect x="5.8" y="4.9" width="7.9" height="7.7" rx="1" fill="#0064d9"/><rect x="7.1" y="6.3" width="2" height="1.8" fill="#fff"/><rect x="10.3" y="6.3" width="2" height="1.8" fill="#fff"/><rect x="7.1" y="9.3" width="2" height="1.8" fill="#fff"/><rect x="10.3" y="9.3" width="2" height="1.8" fill="#fff"/></svg>
<svg class="r" style="left:1407.00px;top:316.60px;" width="10.2" height="6.9" viewBox="0 0 10.2 6.9" fill="none"><polyline points="1,1 5.10,5.90 9.20,1" stroke="#0064d9" stroke-width="1.9" stroke-linecap="round" stroke-linejoin="round"/></svg>
<svg class="r" style="left:1439.60px;top:312.20px;" width="12.8" height="12.8" viewBox="0 0 12.8 12.8" fill="none"><polygon points="12.20,6.40 12.09,7.53 10.58,8.13 10.16,8.91 10.50,10.50 9.62,11.22 8.13,10.58 7.28,10.84 6.40,12.20 5.27,12.09 4.67,10.58 3.89,10.16 2.30,10.50 1.58,9.62 2.22,8.13 1.96,7.28 0.60,6.40 0.71,5.27 2.22,4.67 2.64,3.89 2.30,2.30 3.18,1.58 4.67,2.22 5.52,1.96 6.40,0.60 7.53,0.71 8.13,2.22 8.91,2.64 10.50,2.30 11.22,3.18 10.58,4.67 10.84,5.52" stroke="#0064d9" stroke-width="1.1" stroke-linejoin="round"/><circle cx="6.4" cy="6.4" r="2.18" stroke="#0064d9" stroke-width="1.1"/></svg>
<div class="r" style="left:1455.00px;top:338.50px;width:1.00px;height:382.50px;background:#e4e6e8;"></div>
<div class="r" style="left:298.00px;top:300.60px;width:1.00px;height:420.40px;background:#eceef0;"></div>
<div class="r" style="left:300.00px;top:338.00px;width:671.80px;height:1.00px;background:#e4e6e8;"></div>
<div class="r" style="left:300.00px;top:360.00px;width:197.50px;height:1.50px;background:#e4e6e8;"></div>
<div class="r" style="left:613.40px;top:360.00px;width:358.40px;height:1.50px;background:#e4e6e8;"></div>
<div class="r" style="left:300.00px;top:382.80px;width:671.80px;height:1.20px;background:#e4e6e8;"></div>
<div class="r" style="left:971.80px;top:407.00px;width:495.50px;height:1.00px;background:#e4e6e8;"></div>
<div class="r" style="left:1455.00px;top:338.00px;width:12.30px;height:1.00px;background:#e4e6e8;"></div>
<div class="r" style="left:300.00px;top:406.20px;width:671.80px;height:2.60px;background:#dcdee0;"></div>
<div class="r" style="left:300.00px;top:338.00px;width:1.00px;height:364.80px;background:#e4e6e8;"></div>
<div class="r" style="left:497.00px;top:338.00px;width:1.00px;height:364.80px;background:#e4e6e8;"></div>
<div class="r" style="left:610.40px;top:338.00px;width:3.00px;height:383.00px;background:#dcdee0;"></div>
<div class="r" style="left:971.00px;top:338.00px;width:1.00px;height:364.80px;background:#e4e6e8;"></div>
<div class="t" style="left:306.00px;top:416.17px;font-size:12.2px;font-weight:normal;color:#2a3848;font-style:normal;">Billed Revenue</div>
<div class="t" style="left:504.60px;top:416.17px;font-size:12.2px;font-weight:normal;color:#2a3848;font-style:normal;letter-spacing:-0.3px;">KLETTE005</div>
<div class="t" style="right:507.70px;top:416.17px;font-size:12.2px;color:#2a3848">150.000,00 EUR</div>
<div class="r" style="left:300.00px;top:431.18px;width:671.80px;height:1.00px;background:#e4e6e8;"></div>
<div class="t" style="left:306.00px;top:438.75px;font-size:12.2px;font-weight:normal;color:#2a3848;font-style:normal;">Actual Cost</div>
<div class="t" style="left:504.60px;top:438.75px;font-size:12.2px;font-weight:normal;color:#2a3848;font-style:normal;letter-spacing:-0.3px;">KLETTE005</div>
<div class="t" style="right:507.70px;top:438.75px;font-size:12.2px;color:#2a3848">65.311,50 EUR</div>
<div class="r" style="left:300.00px;top:453.76px;width:671.80px;height:1.00px;background:#e4e6e8;"></div>
<div class="t" style="left:306.00px;top:461.33px;font-size:12.2px;font-weight:normal;color:#2a3848;font-style:normal;">Recognized Revenue</div>
<div class="t" style="left:504.60px;top:461.33px;font-size:12.2px;font-weight:normal;color:#2a3848;font-style:normal;letter-spacing:-0.3px;">KLETTE005</div>
<div class="t" style="right:507.70px;top:461.33px;font-size:12.2px;color:#2a3848">150.000,00 EUR</div>
<div class="r" style="left:300.00px;top:476.34px;width:671.80px;height:1.00px;background:#e4e6e8;"></div>
<div class="t" style="left:306.00px;top:483.91px;font-size:12.2px;font-weight:normal;color:#2a3848;font-style:normal;">Recognized COS</div>
<div class="t" style="left:504.60px;top:483.91px;font-size:12.2px;font-weight:normal;color:#2a3848;font-style:normal;letter-spacing:-0.3px;">KLETTE005</div>
<div class="t" style="right:507.70px;top:483.91px;font-size:12.2px;color:#2a3848">-111.659,22 EUR</div>
<div class="r" style="left:300.00px;top:498.92px;width:671.80px;height:1.00px;background:#e4e6e8;"></div>
<div class="t" style="left:306.00px;top:506.49px;font-size:12.2px;font-weight:normal;color:#2a3848;font-style:normal;">Recognized Margin</div>
<div class="t" style="left:504.60px;top:506.49px;font-size:12.2px;font-weight:normal;color:#2a3848;font-style:normal;letter-spacing:-0.3px;">KLETTE005</div>
<div class="t" style="right:507.70px;top:506.49px;font-size:12.2px;color:#2a3848">71.010,10 EUR</div>
<div class="r" style="left:300.00px;top:521.50px;width:671.80px;height:1.00px;background:#e4e6e8;"></div>
<div class="t" style="left:306.00px;top:529.07px;font-size:12.2px;font-weight:normal;color:#2a3848;font-style:normal;">Revenue Adjustment</div>
<div class="t" style="left:504.60px;top:529.07px;font-size:12.2px;font-weight:normal;color:#2a3848;font-style:normal;letter-spacing:-0.3px;">KLETTE005</div>
<div class="t" style="right:507.70px;top:529.07px;font-size:12.2px;color:#2a3848">0,00 EUR</div>
<div class="r" style="left:300.00px;top:544.08px;width:671.80px;height:1.00px;background:#e4e6e8;"></div>
<div class="t" style="left:306.00px;top:551.65px;font-size:12.2px;font-weight:normal;color:#2a3848;font-style:normal;">COS Adjustment</div>
<div class="t" style="left:504.60px;top:551.65px;font-size:12.2px;font-weight:normal;color:#2a3848;font-style:normal;letter-spacing:-0.3px;">KLETTE005</div>
<div class="t" style="right:507.70px;top:551.65px;font-size:12.2px;color:#2a3848">-144.301,40 EUR</div>
<div class="r" style="left:300.00px;top:566.66px;width:671.80px;height:1.00px;background:#e4e6e8;"></div>
<div class="t" style="left:306.00px;top:574.23px;font-size:12.2px;font-weight:normal;color:#2a3848;font-style:normal;">Deferred COS</div>
<div class="t" style="left:504.60px;top:574.23px;font-size:12.2px;font-weight:normal;color:#2a3848;font-style:normal;letter-spacing:-0.3px;">KLETTE005</div>
<div class="t" style="right:507.70px;top:574.23px;font-size:12.2px;color:#2a3848">-19.301,40 EUR</div>
<div class="r" style="left:300.00px;top:589.24px;width:671.80px;height:1.00px;background:#e4e6e8;"></div>
<div class="t" style="left:306.00px;top:596.81px;font-size:12.2px;font-weight:normal;color:#2a3848;font-style:normal;">Deferred Revenue</div>
<div class="t" style="left:504.60px;top:596.81px;font-size:12.2px;font-weight:normal;color:#2a3848;font-style:normal;letter-spacing:-0.3px;">KLETTE005</div>
<div class="t" style="right:507.70px;top:596.81px;font-size:12.2px;color:#2a3848">0,00 EUR</div>
<div class="r" style="left:300.00px;top:611.82px;width:671.80px;height:1.00px;background:#e4e6e8;"></div>
<div class="t" style="left:306.00px;top:619.39px;font-size:12.2px;font-weight:normal;color:#2a3848;font-style:normal;">Accrued Revenue</div>
<div class="t" style="left:504.60px;top:619.39px;font-size:12.2px;font-weight:normal;color:#2a3848;font-style:normal;letter-spacing:-0.3px;">KLETTE005</div>
<div class="t" style="right:507.70px;top:619.39px;font-size:12.2px;color:#2a3848">0,00 EUR</div>
<div class="r" style="left:300.00px;top:634.40px;width:671.80px;height:1.00px;background:#e4e6e8;"></div>
<div class="t" style="left:306.00px;top:641.97px;font-size:12.2px;font-weight:normal;color:#2a3848;font-style:normal;">Accrued COS</div>
<div class="t" style="left:504.60px;top:641.97px;font-size:12.2px;font-weight:normal;color:#2a3848;font-style:normal;letter-spacing:-0.3px;">KLETTE005</div>
<div class="t" style="right:507.70px;top:641.97px;font-size:12.2px;color:#2a3848">-125.000,00 EUR</div>
<div class="r" style="left:300.00px;top:656.98px;width:671.80px;height:1.00px;background:#e4e6e8;"></div>
<div class="t" style="left:306.00px;top:664.55px;font-size:12.2px;font-weight:normal;color:#2a3848;font-style:normal;">Reserves</div>
<div class="t" style="left:504.60px;top:664.55px;font-size:12.2px;font-weight:normal;color:#2a3848;font-style:normal;letter-spacing:-0.3px;">KLETTE005</div>
<div class="t" style="right:507.70px;top:664.55px;font-size:12.2px;color:#2a3848">0,00 EUR</div>
<div class="r" style="left:300.00px;top:679.56px;width:671.80px;height:1.00px;background:#e4e6e8;"></div>
<div class="t" style="left:306.00px;top:687.13px;font-size:12.2px;font-weight:normal;color:#2a3848;font-style:normal;">Project/Sales Stock</div>
<div class="t" style="left:504.60px;top:687.13px;font-size:12.2px;font-weight:normal;color:#2a3848;font-style:normal;letter-spacing:-0.3px;">KLETTE005</div>
<div class="t" style="right:507.70px;top:687.13px;font-size:12.2px;color:#2a3848">-80.929,58 EUR</div>
<div class="r" style="left:300.00px;top:702.14px;width:671.80px;height:1.00px;background:#e4e6e8;"></div>
<div class="r" style="left:300.00px;top:707.50px;width:1167.30px;height:1.50px;background:#e8eaec;"></div>
<div class="r" style="left:298.00px;top:720.00px;width:1169.30px;height:1.00px;background:#e4e6e8;"></div>
<div class="t" style="left:619.00px;top:344.67px;font-size:12.2px;font-weight:normal;color:#2a3848;font-style:normal;">EW7255</div>
<div class="t" style="left:503.40px;top:355.35px;font-size:12.35px;font-weight:normal;color:#2a3848;font-style:normal;">Product Sold</div>
<div class="t" style="left:619.00px;top:367.17px;font-size:12.2px;font-weight:normal;color:#2a3848;font-style:normal;">EW7255, ATC, With new AT type</div>
<div class="t" style="left:306.20px;top:389.67px;font-size:12.2px;font-weight:normal;color:#2a3848;font-style:normal;">Measures</div>
<div class="t" style="left:504.60px;top:389.87px;font-size:12.2px;font-weight:normal;color:#2a3848;font-style:normal;">WBS Element</div>
<svg class="r" style="left:595.00px;top:344.80px;" width="11" height="10.5" viewBox="0 0 11 10.5" fill="none"><path d="M2.3 1.2 V10 M0.4 3.1 L2.3 0.8 L4.2 3.1" stroke="#5a7696" stroke-width="1.2" stroke-linejoin="round"/><path d="M5.3 0.7 H8.2 M5.3 3.2 H9.3 M5.3 5.6 H10.6" stroke="#5a7696" stroke-width="1"/></svg>
<svg class="r" style="left:595.00px;top:390.20px;" width="11" height="10.5" viewBox="0 0 11 10.5" fill="none"><path d="M2.3 1.2 V10 M0.4 3.1 L2.3 0.8 L4.2 3.1" stroke="#5a7696" stroke-width="1.2" stroke-linejoin="round"/><path d="M5.3 0.7 H8.2 M5.3 3.2 H9.3 M5.3 5.6 H10.6" stroke="#5a7696" stroke-width="1"/></svg>
</body></html>
